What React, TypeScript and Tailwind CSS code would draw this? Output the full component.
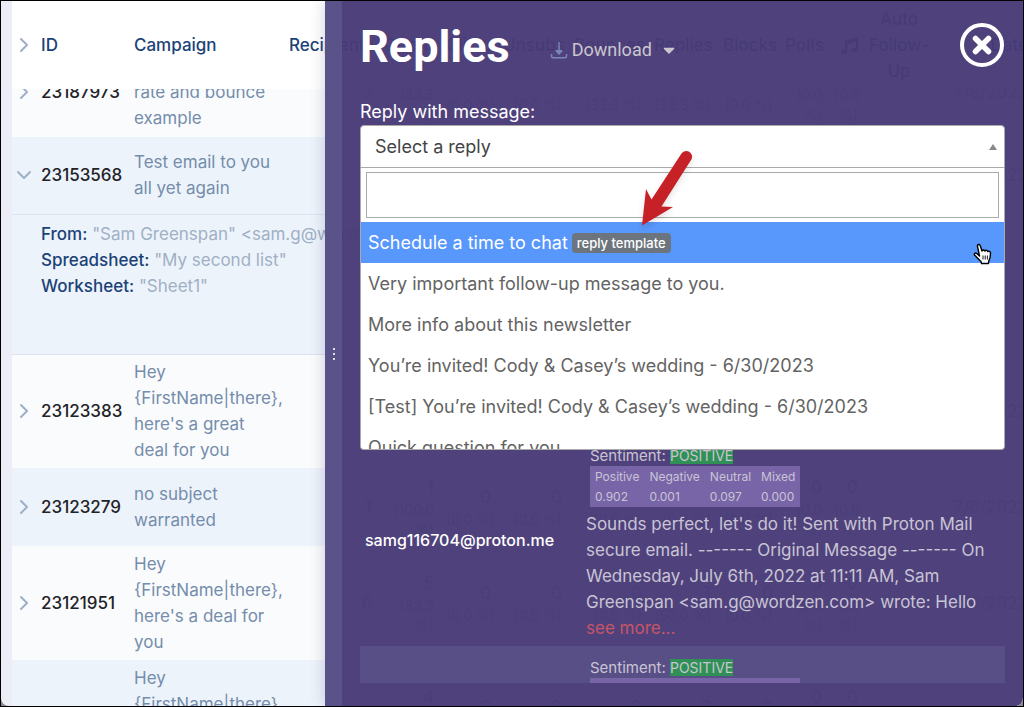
import { Fragment, useState } from "react";
import { FaCaretDown, FaMusic } from "react-icons/fa";
import { FiChevronDown, FiChevronRight } from "react-icons/fi";

type TStat = { count: string; percent: string };

type TCampaign = {
  id: string;
  name: string;
  height: string;
  recipients: string;
  stats: TStat[];
  date: string;
  open?: boolean;
};

const headings = [
  "Recipients",
  "Opens",
  "Clicks",
  "Unsubs",
  "Bounces",
  "Replies",
  "Blocks",
  "Polls",
];

const zero = { count: "0", percent: "(0.0 %)" };
const zeroWrap = { count: "0", percent: "(0.0\n%)" };

const campaigns: TCampaign[] = [
  {
    id: "23187973",
    name: "Testing the open rate and bounce example",
    height: "h-[90px]",
    recipients: "3",
    stats: [
      { count: "1", percent: "(33.3\n%)" },
      zero,
      zero,
      { count: "1", percent: "(33.3 %)" },
      { count: "1", percent: "(33.3 %)" },
      zero,
      zeroWrap,
      zeroWrap,
    ],
    date: "7/8/2022",
  },
  {
    id: "23153568",
    name: "Test email to you all yet again",
    height: "h-[77px]",
    recipients: "",
    stats: [],
    date: "7/7/2022",
    open: true,
  },
  {
    id: "23123383",
    name: "Hey {FirstName|there}, here's a great deal for you",
    height: "h-[114px]",
    recipients: "",
    stats: [],
    date: "7/6/2022",
  },
  {
    id: "23123279",
    name: "no subject warranted",
    height: "h-[78px]",
    recipients: "1",
    stats: [
      { count: "1", percent: "(100.0\n%)" },
      zero,
      zero,
      zero,
      zero,
      zero,
      zeroWrap,
      zeroWrap,
    ],
    date: "7/6/2022",
  },
  {
    id: "23121951",
    name: "Hey {FirstName|there}, here's a deal for you",
    height: "h-[114px]",
    recipients: "6",
    stats: [
      { count: "5", percent: "(83.3\n%)" },
      zero,
      zero,
      zero,
      { count: "3", percent: "(50.0 %)" },
      zero,
      zeroWrap,
      zeroWrap,
    ],
    date: "7/6/2022",
  },
  {
    id: "23121944",
    name: "Hey {FirstName|there}, here's a great deal for you",
    height: "h-[114px]",
    recipients: "6",
    stats: [
      { count: "4", percent: "(66.6\n%)" },
      zero,
      zero,
      zero,
      { count: "3", percent: "(50.0 %)" },
      zero,
      zeroWrap,
      zeroWrap,
    ],
    date: "7/6/2022",
  },
];

const replies = [
  { title: "Schedule a time to chat", template: true },
  { title: "Very important follow-up message to you." },
  { title: "More info about this newsletter" },
  { title: "You’re invited! Cody & Casey’s wedding - 6/30/2023" },
  { title: "[Test] You’re invited! Cody & Casey’s wedding - 6/30/2023" },
  { title: "Quick question for you" },
];

const scores = [
  ["Positive", "0.902"],
  ["Negative", "0.001"],
  ["Neutral", "0.097"],
  ["Mixed", "0.000"],
];

const Columns = () => (
  <colgroup>
    <col className="w-[23px]" />
    <col className="w-[93px]" />
    <col className="w-[155px]" />
    <col className="w-[95px]" />
    <col className="w-[62px]" />
    <col className="w-[57px]" />
    <col className="w-[71px]" />
    <col className="w-[80px]" />
    <col className="w-[69px]" />
    <col className="w-[62px]" />
    <col className="w-[49px]" />
    <col className="w-[36px]" />
    <col className="w-[70px]" />
    <col className="w-[100px]" />
  </colgroup>
);

const CampaignTable = () => {
  return (
    <div className="flex h-full flex-col">
      <table className="w-[1022px] shrink-0 table-fixed bg-white">
        <Columns />
        <thead>
          <tr className="h-[88px] text-right text-[#1b4277]">
            <th>
              <FiChevronRight className="size-6 text-[#9db0c8]" />
            </th>
            <th className="px-1.5 text-left font-medium">ID</th>
            <th className="px-1.5 text-left font-medium">Campaign</th>
            {headings.map((h) => (
              <th key={h} className="px-1.5 font-medium">
                {h}
              </th>
            ))}
            <th className="px-1.5">
              <FaMusic className="ml-auto" />
            </th>
            <th className="px-1 text-center font-medium">Auto Follow-Up</th>
            <th className="px-1.5 font-medium">Date</th>
          </tr>
        </thead>
      </table>

      <div className="min-h-0 flex-1 overflow-hidden">
        <table className="-mt-[42px] w-[1022px] table-fixed">
          <Columns />
          <tbody>
            {campaigns.map((item, i) => (
              <Fragment key={item.id}>
                <tr
                  className={`${item.height} ${
                    i % 2 ? "bg-[#edf3fb]" : "bg-[#fafbfd]"
                  }`}
                >
                  <td className="text-[#9db0c8]">
                    {item.open ? (
                      <FiChevronDown className="size-6" />
                    ) : (
                      <FiChevronRight className="size-6" />
                    )}
                  </td>
                  <td className="px-1.5 font-medium text-[#1f2227]">
                    {item.id}
                  </td>
                  <td className="px-1.5 text-[#748dab]">{item.name}</td>
                  <td className="px-1.5 text-right text-[#5f83cf]">
                    {item.recipients}
                  </td>
                  {item.stats.length ? (
                    item.stats.map((stat, j) => (
                      <td key={j} className="px-1.5 text-right">
                        <div className="text-[#5f83cf]">{stat.count}</div>
                        <div className="text-sm leading-5 whitespace-pre text-[#748dab]">
                          {stat.percent}
                        </div>
                      </td>
                    ))
                  ) : (
                    <td colSpan={8}></td>
                  )}
                  <td></td>
                  <td className="px-1.5 text-right text-[#748dab]">
                    {item.date}
                  </td>
                </tr>
                {item.open && (
                  <tr className="h-[140px] border-y border-[#dbe5f0] bg-[#edf3fb]">
                    <td></td>
                    <td
                      colSpan={13}
                      className="px-1.5 pt-1.5 align-top text-[#9fb0c5]"
                    >
                      <p>
                        <b className="font-medium text-[#1b4277]">From:</b>{" "}
                        "Sam Greenspan" &lt;sam.g@wordzen.com&gt;
                      </p>
                      <p>
                        <b className="font-medium text-[#1b4277]">
                          Spreadsheet:
                        </b>{" "}
                        "My second list"
                      </p>
                      <p>
                        <b className="font-medium text-[#1b4277]">Worksheet:</b>{" "}
                        "Sheet1"
                      </p>
                    </td>
                  </tr>
                )}
              </Fragment>
            ))}
          </tbody>
        </table>
      </div>
    </div>
  );
};

const Sentiment = () => (
  <div className="pl-1">
    <p className="text-[15px] leading-5">
      Sentiment: <span className="bg-[#2f9155] text-sm">POSITIVE</span>
    </p>
    <table className="bg-[#7865a8] text-xs">
      <thead>
        <tr>
          {scores.map(([name]) => (
            <th key={name} className="h-[21px] px-[5px] text-left font-normal">
              {name}
            </th>
          ))}
        </tr>
      </thead>
      <tbody>
        <tr>
          {scores.map(([name, value]) => (
            <td key={name} className="h-5 px-[5px]">
              {value}
            </td>
          ))}
        </tr>
      </tbody>
    </table>
  </div>
);

const ReplySelect = () => {
  const [search, setSearch] = useState("");
  const [active, setActive] = useState(0);

  const list = replies.filter((r) =>
    r.title.toLowerCase().includes(search.toLowerCase())
  );

  return (
    <div className="relative z-10 -mb-4 text-lg leading-[26px]">
      <label htmlFor="reply" className="block text-white">
        Reply with message:
      </label>
      <div className="relative">
        <select
          id="reply"
          className="block h-[43px] w-full appearance-none rounded-t border border-[#aaa] bg-white px-3.5 text-[#444] outline-none"
        >
          <option>Select a reply</option>
        </select>
        <span className="pointer-events-none absolute top-[19px] right-2 border-x-4 border-b-[6px] border-x-transparent border-b-[#888]" />
      </div>
      <div className="h-[282px] overflow-hidden rounded-b border border-t-0 border-[#aaa] bg-white">
        <div className="px-[5px] py-1">
          <input
            type="text"
            aria-label="Search replies"
            value={search}
            onChange={(e) => setSearch(e.target.value)}
            className="block h-[46px] w-full border border-[#aaa] px-1 text-[#444] outline-none"
          />
        </div>
        <ul role="listbox">
          {list.map((r, i) => (
            <li
              key={r.title}
              role="option"
              aria-selected={i === active}
              onMouseEnter={() => setActive(i)}
              className={`flex h-[41px] cursor-pointer items-center gap-1 px-[7px] whitespace-nowrap ${
                i === active ? "bg-[#5897fb] text-white" : "text-[#636363]"
              }`}
            >
              {r.title}
              {r.template && (
                <span className="rounded bg-[#6c757d] px-[5px] text-[13px] leading-5 font-medium text-white">
                  reply template
                </span>
              )}
            </li>
          ))}
        </ul>
      </div>

      {/* pointer to the template badge */}
      <svg
        className="pointer-events-none absolute top-12 left-[276px] h-20 w-16 drop-shadow-md"
        viewBox="0 0 64 80"
        fill="#c52127"
      >
        <path d="M45.500 6.500A5.800 5.800 0 0 1 55.500 12.300L25.500 59.500 37 60 6 78.500 10 42 15.500 52.500z" />
      </svg>
      <svg
        className="pointer-events-none absolute top-36 right-3 h-[22px] w-5"
        viewBox="0 0 20 22"
        fill="#fff"
        stroke="#000"
        strokeWidth="1.4"
        strokeLinejoin="round"
      >
        <path d="M6.500 13 4.500 3.500C4 1.200 6.700.8 7.300 2.800L9 8c.6-1.400 2.500-1.300 2.900 0 .9-1.200 2.600-.8 2.900.6 1.200-1 2.700-.3 2.700 1.400 0 3-.1 5.500-1.700 8l-.3 2.500H8.500L8 18.500C5.500 16.500 3.500 14 1.500 12c-.8-1.500 1-2.500 2.300-1.500z" />
        <path d="M10 12.500v4M12.200 12.500v4M14.400 12.500v4" strokeWidth="0.9" />
      </svg>
    </div>
  );
};

const RepliesDrawer = () => {
  return (
    <aside className="absolute inset-y-0 right-0 left-[324px] flex bg-[#483a77]/96 shadow-[0_0_14px_rgba(70,56,117,0.25)]">
      <div className="flex w-[17px] shrink-0 flex-col items-center justify-center gap-[3px] bg-[#5a538a]">
        <span className="size-0.5 bg-white/80" />
        <span className="size-0.5 bg-white/80" />
        <span className="size-0.5 bg-white/80" />
      </div>

      <div className="flex min-w-0 flex-1 flex-col pr-[18px] pb-[23px] pl-[18px]">
        <header className="flex h-[98px] shrink-0 items-start pt-4 pr-px">
          <h2 className="font-[Roboto] text-[45px] leading-[60px] font-bold text-white">
            Replies
          </h2>
          <button className="mt-5 ml-10 flex items-center gap-1 font-[Roboto] text-lg leading-[26px] text-[#cac6cc]">
            <svg
              className="size-[18px] text-[#7b86b5]"
              viewBox="0 0 18 18"
              fill="none"
              stroke="currentColor"
              strokeWidth="1.500"
              strokeLinejoin="round"
            >
              <path d="M9 1v11M1.500 13v2.200q0 1.500 1.500 1.500h12q1.500 0 1.500-1.500V13" />
              <path d="M6.200 9.800h5.600L9 13z" fill="currentColor" />
            </svg>
            Download
            <FaCaretDown className="ml-1 size-[18px]" />
          </button>
          <button aria-label="Close" className="mt-1.5 ml-auto">
            <svg
              className="size-11"
              viewBox="0 0 44 44"
              fill="none"
              stroke="#fff"
              strokeWidth="4"
            >
              <circle cx="22" cy="22" r="20" />
              <path
                d="M15.500 15.500l13 13M28.500 15.500l-13 13"
                strokeWidth="5.500"
                strokeLinecap="round"
              />
            </svg>
          </button>
        </header>

        <ReplySelect />

        <div className="min-h-0 flex-1 overflow-hidden">
          <table className="w-full table-fixed text-[#c9c4d4]">
            <colgroup>
              <col className="w-[220px]" />
              <col />
            </colgroup>
            <tbody>
              <tr className="h-[212px]">
                <td className="px-[5px] text-base font-medium text-white">
                  samg116704@proton.me
                </td>
                <td className="px-1.5 pt-3 align-top">
                  <Sentiment />
                  <p className="mt-1">
                    Sounds perfect, let's do it! Sent with Proton Mail secure
                    email. ------- Original Message ------- On Wednesday, July
                    6th, 2022 at 11:11 AM, Sam Greenspan
                    &lt;sam.g@wordzen.com&gt; wrote: Hello{" "}
                    <a href="#more" className="block text-[#c65566]">
                      see more...
                    </a>
                  </p>
                </td>
              </tr>
              <tr className="h-[212px] bg-[#8d9bc4]/15">
                <td></td>
                <td className="px-1.5 pt-3 align-top">
                  <Sentiment />
                </td>
              </tr>
            </tbody>
          </table>
        </div>
      </div>
    </aside>
  );
};

const App = () => {
  return (
    <div className="h-screen border border-black bg-[#8a8a8c] font-[Inter,sans-serif] text-[17px] leading-[26px]">
      <div className="relative h-full overflow-hidden rounded-b-lg bg-[#ecedf7] pl-[11px]">
        <CampaignTable />
        <RepliesDrawer />
      </div>
    </div>
  );
};

export default App;
